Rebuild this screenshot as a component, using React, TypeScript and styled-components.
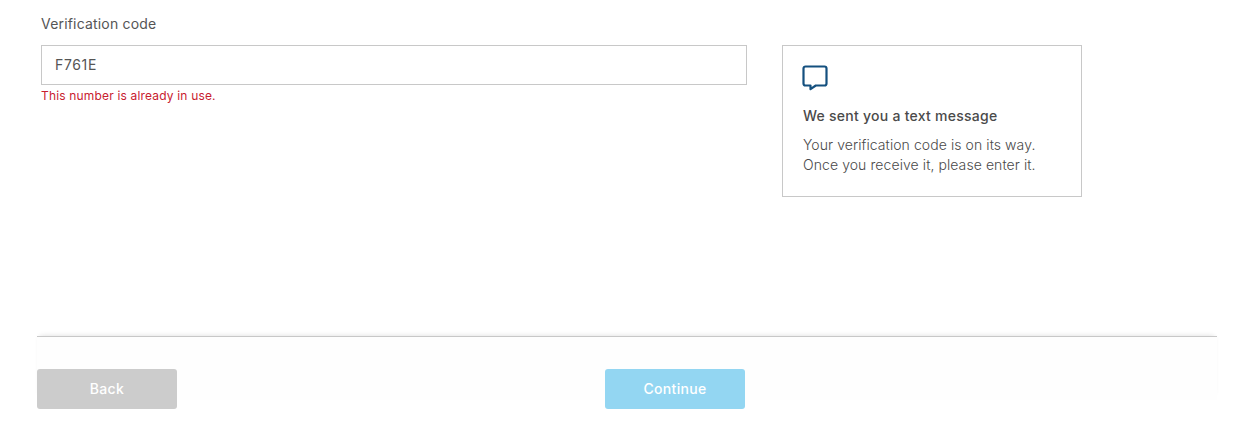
import React from "react";
import styled, { createGlobalStyle } from "styled-components";

const GlobalStyle = createGlobalStyle`
  html, body {
    margin: 0;
    padding: 0;
    background: #fff;
  }
  body {
    font-family: Inter, "Liberation Sans", sans-serif;
    color: #4a4a4a;
  }
`;

const Page = styled.div`
  width: 1239px;
  height: 437px;
  overflow: hidden;
`;

const Content = styled.main`
  display: flex;
  gap: 35px;
  height: 336px;
  padding: 16px 0 0 41px;
  box-sizing: border-box;
`;

const Field = styled.section`
  width: 706px;
`;

const Label = styled.label`
  display: block;
  height: 29px;
  font-size: 14px;
  line-height: 16px;
  letter-spacing: 0.18px;
  color: #555;
`;

const CodeInput = styled.input`
  display: block;
  width: 100%;
  height: 40px;
  box-sizing: border-box;
  padding: 0 13px 2px;
  border: 1px solid #c8c8c8;
  background: #fff;
  font-family: inherit;
  font-size: 14px;
  letter-spacing: 0.65px;
  color: #555;
  outline: none;
`;

const ErrorText = styled.div`
  margin-top: 4px;
  font-size: 12px;
  line-height: 14px;
  letter-spacing: 0.17px;
  color: #c8202f;
`;

const InfoCard = styled.aside`
  width: 300px;
  height: 152px;
  box-sizing: border-box;
  margin-top: 29px;
  padding: 19px 20px 0;
  border: 1px solid #c8c8c8;
`;

const MessageIcon = styled.svg`
  display: block;
  width: 26px;
  height: 26px;
  margin-left: -1px;
`;

const CardTitle = styled.h3`
  margin: 16px 0 0;
  font-size: 14px;
  line-height: 17px;
  font-weight: 500;
  letter-spacing: 0.26px;
  color: #4a4a4a;
`;

const CardText = styled.p`
  margin: 11px 0 0;
  font-size: 14px;
  line-height: 20px;
  font-weight: 300;
  letter-spacing: 0.08px;
  color: #4a4a4a;
`;

const Footer = styled.footer`
  display: flex;
  height: 64px;
  box-sizing: border-box;
  margin: 0 22px 0 37px;
  padding-top: 32px;
  border-top: 1px solid #c8c8c8;
  background: #fefefe;
  box-shadow: 0 -3px 5px -3px rgba(0, 0, 0, 0.14);
`;

const ActionButton = styled.button<{ $tone: string; $gap?: number }>`
  flex: none;
  width: 140px;
  height: 40px;
  margin-left: ${(p) => p.$gap ?? 0}px;
  padding: 0 0 2px;
  border: 0;
  border-radius: 3px;
  background: ${(p) => p.$tone};
  color: #fff;
  font-family: inherit;
  font-size: 14px;
  font-weight: 500;
  letter-spacing: 0.3px;
`;

export default function App() {
  return (
    <Page>
      <GlobalStyle />
      <Content>
        <Field>
          <Label>Verification code</Label>
          <CodeInput defaultValue="F761E" />
          <ErrorText>This number is already in use.</ErrorText>
        </Field>
        <InfoCard>
          <MessageIcon viewBox="0 0 26 26" fill="none">
            <path
              d="M3.5 1.5h19a2 2 0 0 1 2 2v15a2 2 0 0 1-2 2h-8.7l-5.3 3.7v-3.7h-5a2 2 0 0 1-2-2v-15a2 2 0 0 1 2-2z"
              stroke="#14507f"
              strokeWidth="2.2"
              strokeLinejoin="round"
            />
          </MessageIcon>
          <CardTitle>We sent you a text message</CardTitle>
          <CardText>
            Your verification code is on its way.
            <br />
            Once you receive it, please enter it.
          </CardText>
        </InfoCard>
      </Content>
      <Footer>
        <ActionButton $tone="#cccccc">Back</ActionButton>
        <ActionButton $tone="#93d6f2" $gap={428}>
          Continue
        </ActionButton>
      </Footer>
    </Page>
  );
}
